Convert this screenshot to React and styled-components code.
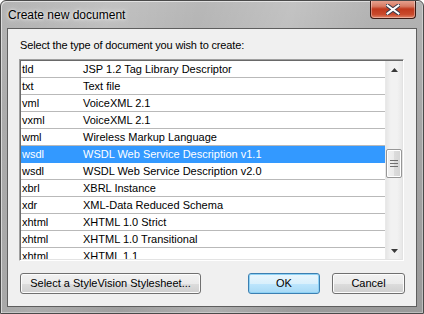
import React from "react";
import styled, { createGlobalStyle } from "styled-components";

const Global = createGlobalStyle`
  html, body { margin: 0; padding: 0; background: #ffffff; }
  body { font-family: "Liberation Sans", Arial, sans-serif; }
  * { box-sizing: border-box; }
`;

const Window = styled.div`
  width: 424px;
  height: 314px;
  display: flex;
  flex-direction: column;
  border: 1px solid #4a4a4a;
  border-radius: 6px 6px 0 0;
  background:
    linear-gradient(105deg, rgba(255,255,255,0) 0%, rgba(255,255,255,0.18) 22%, rgba(255,255,255,0.05) 40%, rgba(255,255,255,0.2) 58%, rgba(255,255,255,0) 75%),
    linear-gradient(180deg, #b4b4b4 0%, #a6a6a6 40%, #9a9a9a 100%);
  box-shadow: inset 1px 1px 0 rgba(255,255,255,0.55), inset -1px -1px 0 rgba(255,255,255,0.35);
  overflow: hidden;
`;

const TitleBar = styled.div`
  height: 27px;
  display: flex;
  align-items: flex-start;
  justify-content: space-between;
  padding-left: 7px;
  padding-right: 7px;
`;

const Title = styled.div`
  font-family: "Liberation Sans", Arial, sans-serif;
  font-size: 12px;
  line-height: 14px;
  color: #000;
  padding-top: 7px;
  text-shadow: 0 0 6px rgba(255,255,255,0.9), 0 0 3px rgba(255,255,255,0.9);
`;

const CloseButton = styled.div`
  width: 46px;
  height: 19px;
  margin-top: -1px;
  border: 1px solid #3a1a14;
  border-top: none;
  border-radius: 0 0 4px 4px;
  background: linear-gradient(180deg, #e9a896 0%, #d77a63 35%, #c0391d 50%, #c94a2c 80%, #e0866a 100%);
  box-shadow: inset 0 0 0 1px rgba(255,255,255,0.35);
  display: flex;
  align-items: center;
  justify-content: center;
`;

const Client = styled.div`
  flex: 1;
  margin: 0 6px 6px 6px;
  border: 1px solid #5e5e5e;
  background: #f0f0f0;
  display: flex;
  flex-direction: column;
  padding: 10px 12px 12px 11px;
  font-family: "Liberation Sans", Arial, sans-serif;
  font-size: 11px;
`;

const Label = styled.div`
  line-height: 13px;
  height: 13px;
  color: #000;
  margin-left: 1px;
  letter-spacing: -0.15px;
`;

const ListBox = styled.div`
  margin-top: 7px;
  height: 202px;
  border: 1px solid #a0a0a0;
  border-right-color: #ffffff;
  border-bottom-color: #ffffff;
  box-shadow: inset 1px 1px 0 #696969, inset -1px -1px 0 #e3e3e3;
  background: #ffffff;
  display: flex;
  padding: 1px;
`;

const Rows = styled.div`
  flex: 1;
  overflow: hidden;
`;

const Row = styled.div`
  display: grid;
  grid-template-columns: 61px 1fr;
  height: 17px;
  line-height: 16px;
  border-bottom: 1px solid ${p => (p.$selected ? "#3399ff" : "#b9b9b9")};
  background: ${p => (p.$selected ? "#3399ff" : "#ffffff")};
  color: ${p => (p.$selected ? "#ffffff" : "#000000")};
  white-space: nowrap;
`;

const Cell = styled.div`
  padding-left: 1px;
  overflow: hidden;
`;

const ScrollBar = styled.div`
  width: 17px;
  display: flex;
  flex-direction: column;
  background: linear-gradient(90deg, #e6e6e6 0%, #f2f2f2 30%, #f2f2f2 70%, #e8e8e8 100%);
  border-left: 1px solid #e9e9e9;
`;

const Arrow = styled.div`
  height: 17px;
  display: flex;
  align-items: center;
  justify-content: center;
`;

const Track = styled.div`
  flex: 1;
  display: flex;
  flex-direction: column;
  padding-top: ${p => p.$offset}px;
`;

const Thumb = styled.div`
  height: 29px;
  width: 16px;
  border: 1px solid #979797;
  border-radius: 2px;
  background: linear-gradient(90deg, #f1f1f1 0%, #ebebeb 50%, #dcdcdc 52%, #d4d4d4 100%);
  box-shadow: inset 0 0 0 1px #ffffff;
  display: flex;
  align-items: center;
  justify-content: center;
`;

const ButtonRow = styled.div`
  margin-top: 12px;
  display: flex;
  justify-content: space-between;
  padding-left: 1px;
`;

const ButtonGroup = styled.div`
  display: flex;
  gap: 12px;
  margin-right: -1px;
`;

const Button = styled.div`
  width: ${p => p.$w}px;
  height: 21px;
  border: 1px solid ${p => (p.$default ? "#3c7fb1" : "#707070")};
  border-radius: 3px;
  background: ${p =>
    p.$default
      ? "linear-gradient(180deg, #eaf6fd 0%, #d9f0fc 50%, #bee6fd 51%, #a7d9f5 100%)"
      : "linear-gradient(180deg, #f2f2f2 0%, #ebebeb 50%, #dddddd 51%, #cfcfcf 100%)"};
  box-shadow: inset 0 0 0 1px ${p => (p.$default ? "#8ed2f5" : "#fcfcfc")};
  display: flex;
  align-items: center;
  justify-content: center;
  font-size: 11px;
  color: #000;
  line-height: 13px;
`;

const rows = [
  ["tld", "JSP 1.2 Tag Library Descriptor"],
  ["txt", "Text file"],
  ["vml", "VoiceXML 2.1"],
  ["vxml", "VoiceXML 2.1"],
  ["wml", "Wireless Markup Language"],
  ["wsdl", "WSDL Web Service Description v1.1", true],
  ["wsdl", "WSDL Web Service Description v2.0"],
  ["xbrl", "XBRL Instance"],
  ["xdr", "XML-Data Reduced Schema"],
  ["xhtml", "XHTML 1.0 Strict"],
  ["xhtml", "XHTML 1.0 Transitional"],
  ["xhtml", "XHTML 1.1"],
];

const CloseX = () => (
  <svg width="14" height="11" viewBox="0 0 14 11">
    <path
      d="M1.5 1.5 L12.5 9.5 M12.5 1.5 L1.5 9.5"
      stroke="#3b3b4a"
      strokeWidth="4"
      strokeLinecap="square"
      fill="none"
    />
    <path
      d="M1.5 1.5 L12.5 9.5 M12.5 1.5 L1.5 9.5"
      stroke="#ffffff"
      strokeWidth="2"
      strokeLinecap="square"
      fill="none"
    />
  </svg>
);

const TriUp = () => (
  <svg width="7" height="4" viewBox="0 0 7 4">
    <path d="M0 4 L3.5 0 L7 4 Z" fill="#3a3a3a" />
  </svg>
);

const TriDown = () => (
  <svg width="7" height="4" viewBox="0 0 7 4">
    <path d="M0 0 L7 0 L3.5 4 Z" fill="#3a3a3a" />
  </svg>
);

const Grip = () => (
  <svg width="8" height="7" viewBox="0 0 8 7">
    <path d="M0 0.5 H8 M0 3.5 H8 M0 6.5 H8" stroke="#707070" strokeWidth="1" />
  </svg>
);

export default function App() {
  return (
    <>
      <Global />
      <Window>
        <TitleBar>
          <Title>Create new document</Title>
          <CloseButton>
            <CloseX />
          </CloseButton>
        </TitleBar>
        <Client>
          <Label>Select the type of document you wish to create:</Label>
          <ListBox>
            <Rows>
              {rows.map(([ext, desc, sel], i) => (
                <Row key={i} $selected={sel}>
                  <Cell>{ext}</Cell>
                  <Cell>{desc}</Cell>
                </Row>
              ))}
            </Rows>
            <ScrollBar>
              <Arrow>
                <TriUp />
              </Arrow>
              <Track $offset={71}>
                <Thumb>
                  <Grip />
                </Thumb>
              </Track>
              <Arrow>
                <TriDown />
              </Arrow>
            </ScrollBar>
          </ListBox>
          <ButtonRow>
            <Button $w={181}>Select a StyleVision Stylesheet...</Button>
            <ButtonGroup>
              <Button $w={72} $default>OK</Button>
              <Button $w={73}>Cancel</Button>
            </ButtonGroup>
          </ButtonRow>
        </Client>
      </Window>
    </>
  );
}
